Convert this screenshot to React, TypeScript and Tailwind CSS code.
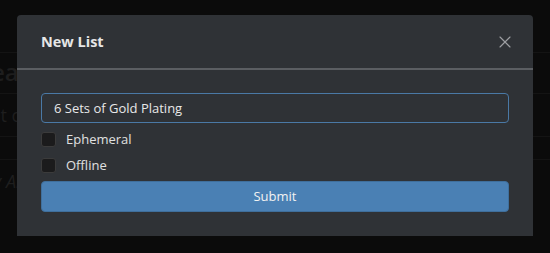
import { X } from 'lucide-react';

export default function App() {
  return (
    <div className="relative h-[253px] w-[550px] overflow-hidden bg-[#0b0b0b] font-['Open_Sans',sans-serif]">
      {/* faint page behind the backdrop */}
      <div className="-ml-[22px] pt-[52px] text-[#1e1e1e]">
        <div className="border-t border-[#141414] pt-1 text-[24px] font-semibold leading-[30px]">Learn</div>
        <div className="mt-[6px] border-t border-[#141414] pt-[10px] text-[18px] leading-[22px]">List of items</div>
        <div className="mt-[10px] border-t border-[#141414]" />
        <div className="mt-[22px] border-t border-[#141414] pt-[10px] text-[18px] italic leading-[22px]">My All</div>
      </div>

      <div className="absolute left-[17px] top-[15px] h-[221px] w-[516px] rounded-t-[4px] bg-[#2f3236]">
        <div className="flex h-[55px] items-center justify-between border-b-2 border-[#5b5e62] px-6">
          <h2 className="text-[14.5px] font-bold text-[#e6e6e6]">New List</h2>
          <X size={20} strokeWidth={1.4} className="mr-[-6px] text-[#9c9ea1]" />
        </div>
        <div className="px-6 pt-[23px]">
          <input
            defaultValue="6 Sets of Gold Plating"
            className="h-[30px] w-full rounded-[4px] border border-[#4a79a6] bg-[#2f3236] px-3 text-[13px] text-[#e8e8e8] outline-none"
          />
          <label className="mt-[9px] flex h-[15px] items-center gap-[10px] text-[13px] text-[#e0e0e0]">
            <span className="h-[15px] w-[15px] rounded-[3px] border border-[#3b3b3b] bg-[#1b1b1c]" />
            Ephemeral
          </label>
          <label className="mt-[11px] flex h-[15px] items-center gap-[10px] text-[13px] text-[#e0e0e0]">
            <span className="h-[15px] w-[15px] rounded-[3px] border border-[#3b3b3b] bg-[#1b1b1c]" />
            Offline
          </label>
          <button
            type="button"
            className="mt-[8px] h-[31px] w-full rounded-[4px] border border-[#3f6f9c] bg-[#4a80b4] text-[13px] font-medium text-[#f2f2f2]"
          >
            Submit
          </button>
        </div>
      </div>
    </div>
  );
}
